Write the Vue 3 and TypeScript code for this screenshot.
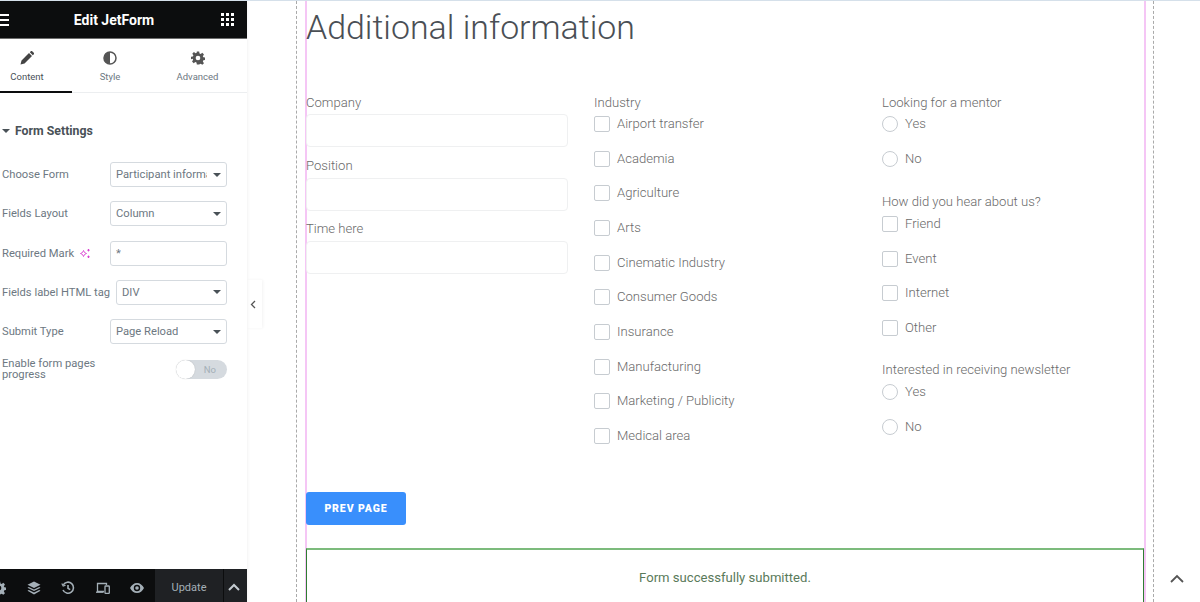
<script setup lang="ts">
const industries = [
  'Airport transfer',
  'Academia',
  'Agriculture',
  'Arts',
  'Cinematic Industry',
  'Consumer Goods',
  'Insurance',
  'Manufacturing',
  'Marketing / Publicity',
  'Medical area',
]
const heardFrom = ['Friend', 'Event', 'Internet', 'Other']
const yesNo = ['Yes', 'No']
const textFields = ['Company', 'Position', 'Time here']

interface SettingRow {
  label: string
  value: string
  kind: 'select' | 'input'
}

const settings: SettingRow[] = [
  { label: 'Choose Form', value: 'Participant information', kind: 'select' },
  { label: 'Fields Layout', value: 'Column', kind: 'select' },
  { label: 'Required Mark', value: '*', kind: 'input' },
  { label: 'Fields label HTML tag', value: 'DIV', kind: 'select' },
  { label: 'Submit Type', value: 'Page Reload', kind: 'select' },
]
</script>

<template>
  <div class="page">
    <aside class="panel">
      <header class="panel-head">
        <span class="burger"><i></i><i></i><i></i></span>
        <span class="panel-title">Edit JetForm</span>
        <svg class="apps" width="13" height="13" viewBox="0 0 13 13" fill="#fff">
          <rect x="0" y="0" width="3" height="3" /><rect x="5" y="0" width="3" height="3" /><rect x="10" y="0" width="3" height="3" />
          <rect x="0" y="5" width="3" height="3" /><rect x="5" y="5" width="3" height="3" /><rect x="10" y="5" width="3" height="3" />
          <rect x="0" y="10" width="3" height="3" /><rect x="5" y="10" width="3" height="3" /><rect x="10" y="10" width="3" height="3" />
        </svg>
      </header>

      <nav class="tabs">
        <div class="tab active">
          <svg width="14" height="14" viewBox="0 0 14 14" fill="#444">
            <path d="M0.5 13.5l1-4L9 2l3 3-7.500 7.500zM9.800 1.200l1-1a1 1 0 0 1 1.400 0l1.600 1.600a1 1 0 0 1 0 1.400l-1 1z" />
          </svg>
          <span>Content</span>
        </div>
        <div class="tab">
          <svg width="14" height="14" viewBox="0 0 14 14">
            <circle cx="7" cy="7" r="6" fill="none" stroke="#555" stroke-width="1.500" />
            <path d="M7 1a6 6 0 0 0 0 12z" fill="#555" />
          </svg>
          <span>Style</span>
        </div>
        <div class="tab">
          <svg width="14" height="14" viewBox="0 0 24 24" fill="#555">
            <path fill-rule="evenodd" d="M10 1h4l.6 3.200 2 .9L19.400 3.200l2.800 2.800-1.900 2.800.9 2 3.200.6v4l-3.200.6-.9 2 1.900 2.800-2.800 2.800-2.800-1.900-2 .9L14 23h-4l-.6-3.200-2-.9-2.800 1.900-2.800-2.800 1.900-2.800-.9-2L0 14v-4l3.200-.6.9-2L2.200 4.600 5 1.800l2.800 1.900 2-.9zM12 8a4 4 0 1 0 0 8 4 4 0 0 0 0-8z" />
          </svg>
          <span>Advanced</span>
        </div>
      </nav>

      <div class="panel-body">
        <h3 class="section"><i class="caret dark"></i>Form Settings</h3>

        <div v-for="row in settings" :key="row.label" class="setting">
          <span class="setting-label">
            {{ row.label }}
            <svg v-if="row.kind === 'input'" class="sparkle" width="12" height="11" viewBox="0 0 12 11" fill="none" stroke="#d93fd0">
              <path d="M4.500 2.500l1 2 2 1-2 1-1 2-1-2-2-1 2-1z" stroke-width=".9" />
              <path d="M9.500 1v2.400M8.300 2.200h2.400M9.500 7.600V10M8.300 8.800h2.400" stroke-width="1" />
            </svg>
          </span>
          <div class="control" :class="{ narrow: row.value === 'DIV' }">
            <span class="control-value">{{ row.value }}</span>
            <i v-if="row.kind === 'select'" class="caret"></i>
          </div>
        </div>

        <div class="switch-row">
          <span class="setting-label wrap">Enable form pages progress</span>
          <div class="switch"><i></i><span>No</span></div>
        </div>
      </div>

      <footer class="panel-foot">
        <div class="foot-icons">
          <svg class="foot-gear" width="14" height="14" viewBox="0 0 24 24" fill="#a4afb7">
            <path fill-rule="evenodd" d="M10 1h4l.6 3.200 2 .9L19.400 3.200l2.800 2.800-1.900 2.800.9 2 3.200.6v4l-3.200.6-.9 2 1.900 2.800-2.800 2.800-2.800-1.900-2 .9L14 23h-4l-.6-3.200-2-.9-2.800 1.900-2.800-2.800 1.900-2.800-.9-2L0 14v-4l3.200-.6.9-2L2.200 4.600 5 1.800l2.800 1.900 2-.9zM12 8a4 4 0 1 0 0 8 4 4 0 0 0 0-8z" />
          </svg>
          <svg width="14" height="14" viewBox="0 0 14 14" fill="#a4afb7">
            <path d="M7 0.500l6.500 3.200L7 7 .5 3.700z" />
            <path d="M1.800 6l-1.300.8L7 10l6.500-3.200L12.200 6 7 8.500z" />
            <path d="M1.800 9l-1.300.8L7 13.500l6.500-3.700L12.200 9 7 11.500z" />
          </svg>
          <svg width="14" height="14" viewBox="0 0 14 14" fill="none" stroke="#a4afb7" stroke-width="1.600">
            <path d="M2.300 3.800A5.500 5.500 0 1 1 2 9" />
            <path d="M7 4v3.300l2.200 1.400" />
            <path d="M.8 2.500L2.200 5l2.400-.8" stroke-width="1.200" />
          </svg>
          <svg width="14" height="12" viewBox="0 0 14 12" fill="none" stroke="#a4afb7" stroke-width="1.300">
            <path d="M8 9.500H1.500V1.500h9V3" />
            <path d="M0 10.200h7.500" />
            <rect x="9" y="4" width="4.300" height="7.300" rx=".6" />
          </svg>
          <svg width="14" height="10" viewBox="0 0 14 10" fill="#a4afb7">
            <path fill-rule="evenodd" d="M7 0c3 0 5.500 2 7 5-1.500 3-4 5-7 5S1.500 8 0 5c1.500-3 4-5 7-5zm0 1.800a3.200 3.200 0 1 0 0 6.400 3.200 3.200 0 0 0 0-6.400z" />
            <circle cx="7" cy="5" r="1.800" />
          </svg>
        </div>
        <div class="foot-update">Update</div>
        <div class="foot-more">
          <svg width="12" height="8" viewBox="0 0 12 8" fill="none" stroke="#c5ccd2" stroke-width="2"><path d="M1 7l5-5 5 5" /></svg>
        </div>
      </footer>
    </aside>

    <main class="canvas">
      <button class="collapse" type="button" aria-label="Collapse panel">
        <svg width="6" height="9" viewBox="0 0 6 9" fill="none" stroke="#555" stroke-width="1.300"><path d="M5 1L1.500 4.500 5 8" /></svg>
      </button>

      <div class="dashed-frame">
        <section class="form-area">
          <h1 class="form-title">Additional information</h1>

          <div class="form-columns">
            <div class="col">
              <div v-for="field in textFields" :key="field" class="text-field">
                <label>{{ field }}</label>
                <div class="text-input"></div>
              </div>
            </div>

            <div class="col">
              <div class="group">
                <label>Industry</label>
                <div v-for="item in industries" :key="item" class="option">
                  <i class="box"></i><span>{{ item }}</span>
                </div>
              </div>
            </div>

            <div class="col">
              <div class="group">
                <label>Looking for a mentor</label>
                <div v-for="item in yesNo" :key="item" class="option">
                  <i class="box round"></i><span>{{ item }}</span>
                </div>
              </div>
              <div class="group">
                <label>How did you hear about us?</label>
                <div v-for="item in heardFrom" :key="item" class="option">
                  <i class="box"></i><span>{{ item }}</span>
                </div>
              </div>
              <div class="group">
                <label>Interested in receiving newsletter</label>
                <div v-for="item in yesNo" :key="item" class="option">
                  <i class="box round"></i><span>{{ item }}</span>
                </div>
              </div>
            </div>
          </div>

          <button class="prev-btn" type="button">PREV PAGE</button>

          <div class="success">Form successfully submitted.</div>
        </section>
      </div>

      <div class="to-top">
        <svg width="14" height="9" viewBox="0 0 14 9" fill="none" stroke="#555" stroke-width="1.800"><path d="M1 8l6-6 6 6" /></svg>
      </div>
    </main>
  </div>
</template>

<style>
html,
body {
  margin: 0;
  height: 100%;
  overflow: hidden;
  background: #fff;
}
</style>

<style scoped>
.page {
  display: flex;
  width: 1200px;
  height: 602px;
  overflow: hidden;
  font-family: Roboto, "Liberation Sans", sans-serif;
  border-top: 1px solid #d5e0ea;
  box-sizing: border-box;
}

/* left editor panel */
.panel {
  width: 247px;
  flex: none;
  display: flex;
  flex-direction: column;
  background: #fff;
  box-shadow: 1px 0 3px rgba(0, 0, 0, 0.05);
  z-index: 2;
}

.panel-head {
  height: 38px;
  flex: none;
  display: flex;
  align-items: center;
  justify-content: space-between;
  padding-right: 13px;
  background: #0c0d0e;
  border-bottom: 1px solid #6d6d6d;
  box-sizing: border-box;
}

.burger {
  width: 9px;
  display: flex;
  flex-direction: column;
  gap: 3px;
}

.burger i {
  display: block;
  height: 2px;
  background: #fff;
}

.panel-title {
  margin-left: -2px;
  color: #fff;
  font-size: 14px;
  font-weight: 700;
}

.tabs {
  display: grid;
  grid-template-columns: 90px 76px 99px;
  height: 54px;
  flex: none;
  margin-left: -18px;
  border-bottom: 1px solid #eceef0;
  box-sizing: border-box;
}

.tab {
  display: flex;
  flex-direction: column;
  align-items: center;
  padding-top: 12px;
  gap: 6px;
  box-sizing: border-box;
  color: #6d7882;
  font-size: 9.500px;
}

.tab.active {
  color: #495157;
  border-bottom: 2px solid #0c0d0e;
  height: 54px;
}

.panel-body {
  flex: 1;
  padding: 31px 20px 0 2px;
}

.section {
  display: flex;
  align-items: center;
  margin: 0 0 24px;
  height: 14px;
  color: #495157;
  font-size: 12.300px;
  font-weight: 700;
}

.caret {
  flex: none;
  width: 0;
  height: 0;
  border-left: 4px solid transparent;
  border-right: 4px solid transparent;
  border-top: 4px solid #495157;
}

.caret.dark {
  margin: 0 5px 0 0;
}

.setting {
  display: flex;
  align-items: center;
  justify-content: space-between;
  height: 25px;
  margin-bottom: 14.250px;
}

.setting-label {
  color: #6d7882;
  font-size: 11.200px;
  white-space: nowrap;
}

.setting-label.wrap {
  white-space: normal;
  width: 120px;
  line-height: 11px;
}

.sparkle {
  vertical-align: -2px;
  margin-left: 2px;
}

.control {
  width: 117px;
  height: 25px;
  display: flex;
  align-items: center;
  justify-content: space-between;
  gap: 6px;
  padding: 0 5px 0 5px;
  border: 1px solid #d5dadf;
  border-radius: 3px;
  box-sizing: border-box;
  color: #6d7882;
  font-size: 11.200px;
}

.control.narrow {
  width: 111px;
}

.control-value {
  overflow: hidden;
  white-space: nowrap;
}

.switch-row {
  display: flex;
  align-items: center;
  justify-content: space-between;
  margin-top: 1px;
}

.switch {
  position: relative;
  width: 51px;
  height: 19px;
  flex: none;
  display: flex;
  align-items: center;
  justify-content: flex-end;
  padding-right: 11px;
  border-radius: 10px;
  background: #d5dadf;
  box-sizing: border-box;
  color: #a4afb7;
  font-size: 9.500px;
}

.switch i {
  position: absolute;
  left: 0;
  top: 0;
  width: 19px;
  height: 19px;
  border-radius: 50%;
  background: #fff;
  box-shadow: 0 0 1px rgba(0, 0, 0, 0.25);
}

.panel-foot {
  height: 33px;
  flex: none;
  display: flex;
  background: #0c0d0e;
}

.foot-icons {
  width: 155px;
  display: flex;
  align-items: center;
  justify-content: space-between;
  padding: 4px 11px 0 0;
  box-sizing: border-box;
}

.foot-gear {
  margin-left: -8px;
}

.foot-update {
  width: 68px;
  display: flex;
  align-items: center;
  justify-content: center;
  padding-top: 4px;
  box-sizing: border-box;
  background: #1f2124;
  color: #a4afb7;
  font-size: 11px;
}

.foot-more {
  flex: 1;
  display: flex;
  align-items: center;
  justify-content: center;
  padding: 3px 3px 0 0;
  box-sizing: border-box;
  background: #1f2124;
  border-left: 1px solid #0c0d0e;
}

/* preview canvas */
.canvas {
  position: relative;
  flex: 1;
  display: flex;
  padding-left: 49px;
  min-width: 0;
}

.collapse {
  position: absolute;
  left: 0;
  top: 279px;
  width: 15px;
  height: 48px;
  padding: 0 4px 0 0;
  display: flex;
  align-items: center;
  justify-content: center;
  background: #fff;
  border: 0;
  box-shadow: 1px 0 3px rgba(0, 0, 0, 0.05);
}

.dashed-frame {
  width: 858px;
  flex: none;
  padding: 0 7px 0 8px;
  border-left: 1px dashed #aaa;
  border-right: 1px dashed #aaa;
  box-sizing: border-box;
}

.form-area {
  height: 700px;
  border-left: 1px solid #f5c6f5;
  border-right: 1px solid #f5c6f5;
  box-shadow: inset 1px 0 0 #f5c6f5, inset -1px 0 0 #f5c6f5;
}

.form-title {
  margin: 0;
  height: 94px;
  padding-top: 7px;
  box-sizing: border-box;
  color: #4a4f55;
  font-size: 33.900px;
  font-weight: 300;
  line-height: 40px;
}

.form-columns {
  display: grid;
  grid-template-columns: repeat(3, 288px);
  height: 397px;
}

label {
  display: block;
  height: 16px;
  color: #6a6a6a;
  font-size: 13.100px;
  font-weight: 300;
  line-height: 16px;
}

.text-field {
  margin-bottom: 11px;
}

.text-field + .text-field {
  margin-bottom: 10px;
}

.text-input {
  width: 262px;
  height: 33px;
  margin-top: 3px;
  border: 1px solid #eff0f1;
  border-radius: 4px;
  box-sizing: border-box;
}

.text-field + .text-field .text-input {
  margin-top: 4px;
}

.group {
  margin-bottom: 27.700px;
}

.group + .group {
  margin-bottom: 26.300px;
}

.option {
  display: flex;
  align-items: flex-start;
  gap: 7px;
  height: 16px;
  margin: 5px 0 18.670px;
  color: #6a6a6a;
  font-size: 13.100px;
  font-weight: 300;
  line-height: 15px;
}

.option + .option {
  margin-top: 0;
}

.group + .group label + .option {
  margin-top: 5.500px;
}

.group + .group + .group label + .option {
  margin-top: 6px;
}

.box {
  flex: none;
  width: 16px;
  height: 16px;
  border: 1px solid #c7ccd1;
  border-radius: 2px;
  box-sizing: border-box;
}

.box.round {
  border-radius: 50%;
}

.prev-btn {
  display: block;
  width: 100px;
  height: 33px;
  padding: 0;
  border: 0;
  border-radius: 3px;
  background: #398ffc;
  color: #fff;
  font-family: inherit;
  font-size: 10.500px;
  font-weight: 900;
  letter-spacing: 0.9px;
}

.success {
  width: 838px;
  height: 80px;
  margin-top: 23px;
  padding-top: 20px;
  box-sizing: border-box;
  background: #fff;
  border-top: 2px solid #7cbb7c;
  border-left: 1px solid #2e7d32;
  border-right: 1px solid #2e7d32;
  color: #5a7a5a;
  font-size: 13.100px;
  font-weight: 400;
  text-align: center;
}

.to-top {
  flex: 1;
  display: flex;
  justify-content: center;
  align-items: flex-end;
  padding-bottom: 19px;
}
</style>
